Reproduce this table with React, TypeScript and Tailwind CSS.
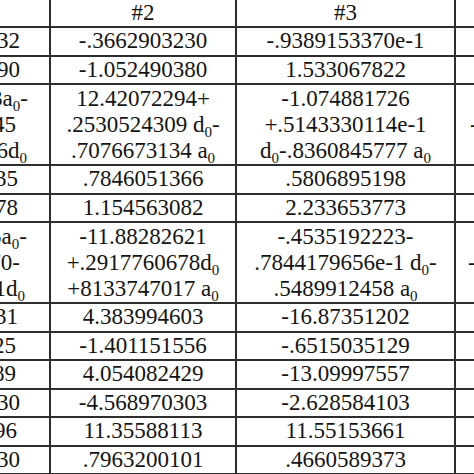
import React from "react";

type L0 = { t: string; pr: string };
type Row = {
  h: string;
  c0: L0[];
  c1: string[];
  c2: string[];
  c3: { t: string; pl: string }[];
  triple?: boolean;
};

function T({ s }: { s: string }) {
  const parts = s.split("_");
  return (
    <>
      {parts.map((p, i) =>
        i === 0 ? (
          <React.Fragment key={i}>{p}</React.Fragment>
        ) : (
          <React.Fragment key={i}>
            <span className="relative top-[5px] text-[15px] leading-none">{p[0]}</span>
            {p.slice(1)}
          </React.Fragment>
        )
      )}
    </>
  );
}

const rows: Row[] = [
  { h: "h-[28.5px]", c0: [{ t: "32", pr: "pr-[29px]" }], c1: ["-.3662903230"], c2: ["-.9389153370e-1"], c3: [] },
  { h: "h-[28.5px]", c0: [{ t: "90", pr: "pr-[29px]" }], c1: ["-1.052490380"], c2: ["1.533067822"], c3: [] },
  {
    h: "h-[81px]",
    triple: true,
    c0: [
      { t: "3a_0-", pr: "pr-[21px]" },
      { t: "45", pr: "pr-[33px]" },
      { t: "76d_0", pr: "pr-[22px]" },
    ],
    c1: ["12.42072294+", ".2530524309 d_0-", ".7076673134 a_0"],
    c2: ["-1.074881726", "+.5143330114e-1", "d_0-.8360845777 a_0"],
    c3: [
      { t: "", pl: "pl-[14px]" },
      { t: "-", pl: "pl-[14px]" },
      { t: "", pl: "pl-[14px]" },
    ],
  },
  { h: "h-[28.5px]", c0: [{ t: "35", pr: "pr-[31px]" }], c1: [".7846051366"], c2: [".5806895198"], c3: [] },
  { h: "h-[28.5px]", c0: [{ t: "78", pr: "pr-[31px]" }], c1: ["1.154563082"], c2: ["2.233653773"], c3: [] },
  {
    h: "h-[81px]",
    triple: true,
    c0: [
      { t: "5a_0-", pr: "pr-[22px]" },
      { t: "70-", pr: "pr-[29px]" },
      { t: "1d_0", pr: "pr-[24px]" },
    ],
    c1: ["-11.88282621", "+.2917760678d_0", "+8133747017 a_0"],
    c2: ["-.4535192223-", ".7844179656e-1 d_0-", ".5489912458 a_0"],
    c3: [
      { t: "", pl: "pl-[12px]" },
      { t: "-", pl: "pl-[12px]" },
      { t: "", pl: "pl-[12px]" },
    ],
  },
  { h: "h-[28.5px]", c0: [{ t: "31", pr: "pr-[31px]" }], c1: ["4.383994603"], c2: ["-16.87351202"], c3: [] },
  { h: "h-[28.5px]", c0: [{ t: "25", pr: "pr-[33px]" }], c1: ["-1.401151556"], c2: ["-.6515035129"], c3: [] },
  { h: "h-[28.5px]", c0: [{ t: "89", pr: "pr-[33px]" }], c1: ["4.054082429"], c2: ["-13.09997557"], c3: [] },
  { h: "h-[28.5px]", c0: [{ t: "30", pr: "pr-[29px]" }], c1: ["-4.568970303"], c2: ["-2.628584103"], c3: [] },
  { h: "h-[28.5px]", c0: [{ t: "96", pr: "pr-[32px]" }], c1: ["11.35588113"], c2: ["11.55153661"], c3: [] },
  { h: "h-[28.5px]", c0: [{ t: "30", pr: "pr-[29px]" }], c1: [".7963200101"], c2: [".4660589373"], c3: [] },
];

const GRID = "grid grid-cols-[51px_186px_219px_1fr] border-b-2 border-[#2e2e2e]";
const CELL = "flex flex-col justify-center overflow-hidden whitespace-nowrap";

export default function App() {
  return (
    <div
      className="w-[474px] h-[474px] overflow-hidden bg-white text-[#141414] text-[23px] leading-[26px]"
      style={{ fontFamily: '"Liberation Serif", "Times New Roman", serif' }}
    >
      <div className={`${GRID} h-[28px]`}>
        <div className={`${CELL} border-r-2 border-[#2e2e2e]`} />
        <div className={`${CELL} items-center border-r-2 border-[#2e2e2e]`}>#2</div>
        <div className={`${CELL} items-center border-r-2 border-[#2e2e2e]`}>#3</div>
        <div className={CELL} />
      </div>
      {rows.map((r, i) => (
        <div key={i} className={`${GRID} ${r.h}`}>
          <div className={`${CELL} items-end border-r-2 border-[#2e2e2e]`}>
            {r.c0.map((l, j) => (
              <div key={j} className={l.pr}>
                <T s={l.t} />
              </div>
            ))}
          </div>
          <div className={`${CELL} items-center border-r-2 border-[#2e2e2e]`}>
            {r.c1.map((l, j) => (
              <div key={j}>
                <T s={l} />
              </div>
            ))}
          </div>
          <div className={`${CELL} items-center border-r-2 border-[#2e2e2e]`}>
            {r.c2.map((l, j) => (
              <div key={j}>
                <T s={l} />
              </div>
            ))}
          </div>
          <div className={`${CELL} items-start`}>
            {r.c3.map((l, j) => (
              <div key={j} className={`${l.pl} h-[26px]`}>
                {l.t}
              </div>
            ))}
          </div>
        </div>
      ))}
    </div>
  );
}
